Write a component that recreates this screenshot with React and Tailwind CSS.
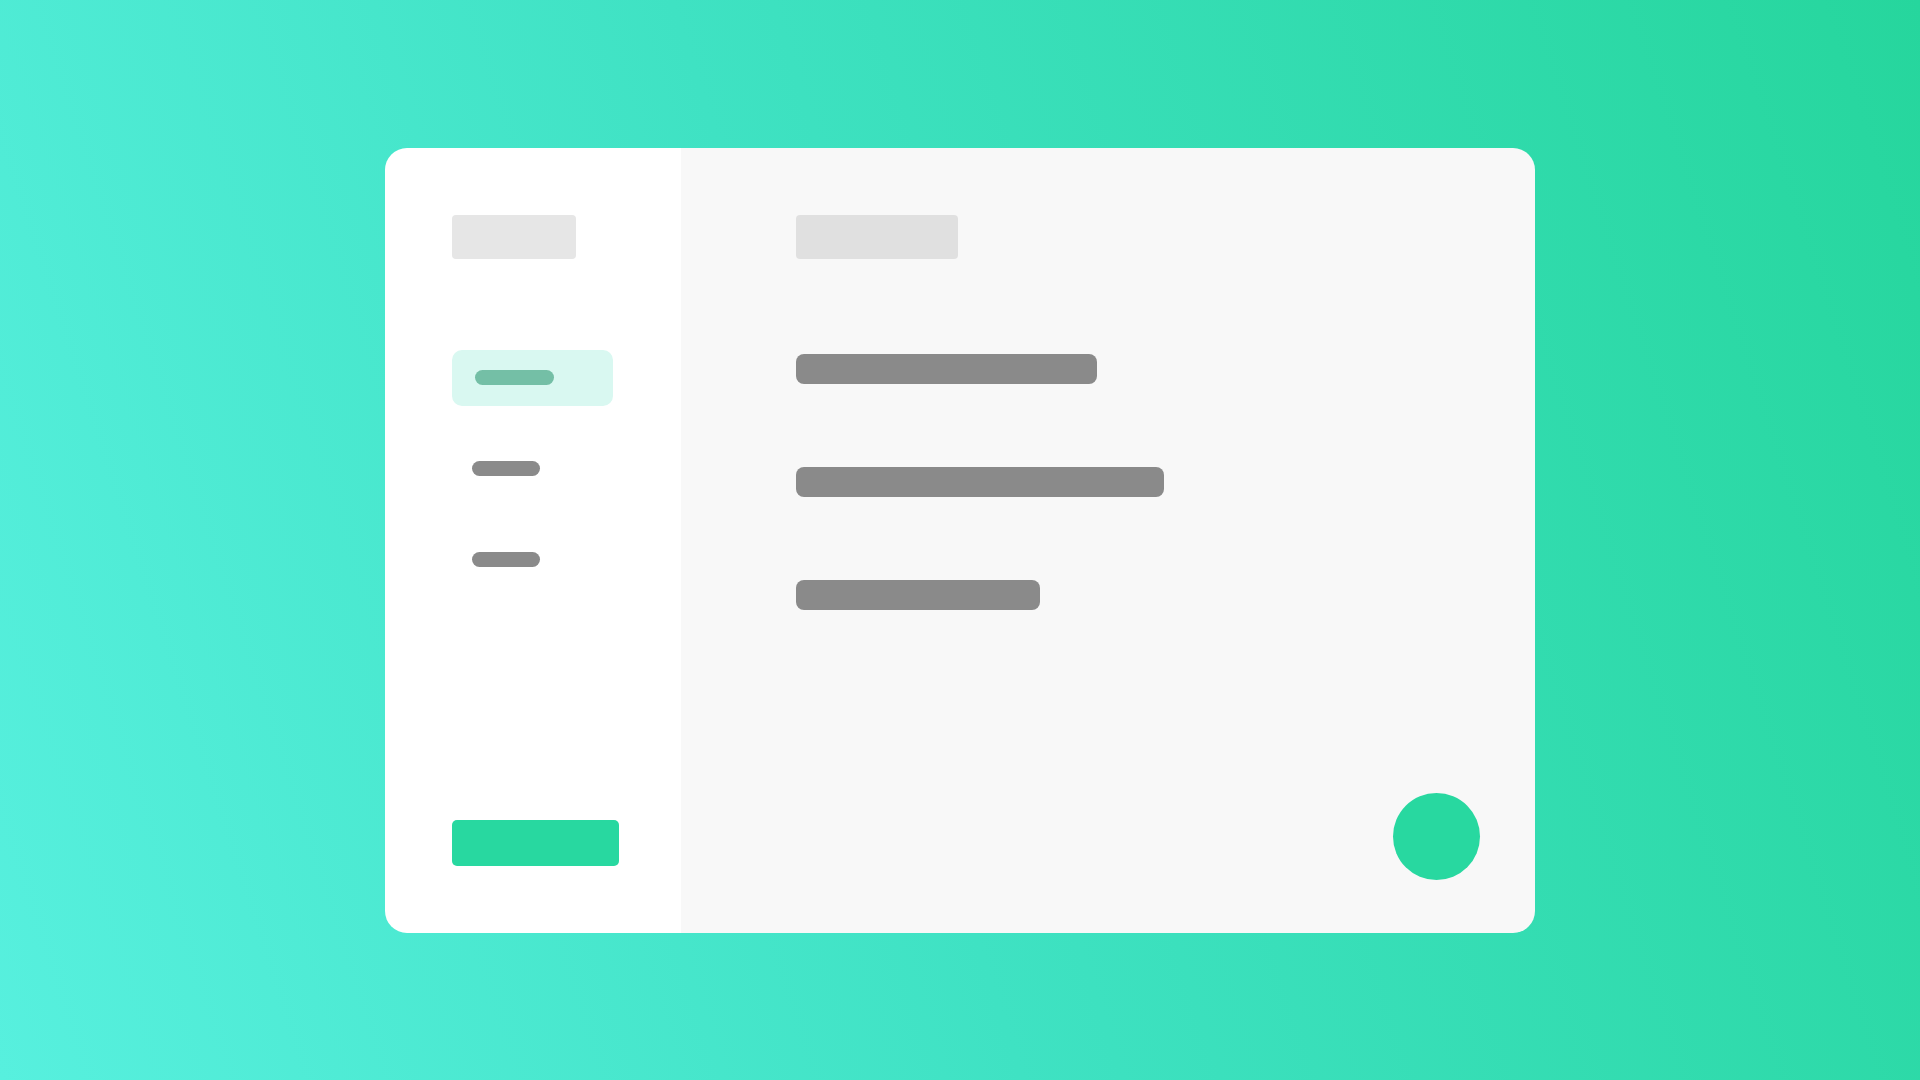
import React from 'react';

function NavItem({ active, width }) {
  return (
    <div
      className={`h-[56px] w-[161px] flex items-center rounded-[10px] ${
        active ? 'bg-[#d9f8f1] pl-[23px]' : 'pl-[20px]'
      }`}
    >
      <div className={`h-[15px] rounded-full ${active ? 'bg-[#74bfa6]' : 'bg-[#8a8a8a]'} ${width}`}></div>
    </div>
  );
}

export default function App() {
  return (
    <div className="w-full h-screen flex items-center justify-center bg-[linear-gradient(72deg,#57f0de_0%,#3fe2c3_45%,#26d69d_100%)]">
      {/* Window */}
      <div className="w-[1150px] h-[785px] flex rounded-[22px] overflow-hidden">
        {/* Sidebar */}
        <div className="w-[296px] bg-white flex flex-col p-[67px]">
          <div className="w-[124px] h-[44px] rounded-[4px] bg-[#e6e6e6]"></div>
          <div className="mt-[91px] flex flex-col gap-[35px]">
            <NavItem active width="w-[79px]" />
            <NavItem width="w-[68px]" />
            <NavItem width="w-[68px]" />
          </div>
          <div className="mt-auto w-[167px] h-[46px] rounded-[5px] bg-[#28d8a0]"></div>
        </div>

        {/* Main */}
        <div className="flex-1 bg-[#f8f8f8] flex flex-col pl-[115px] pt-[67px] pr-[55px] pb-[53px]">
          <div className="w-[162px] h-[44px] rounded-[4px] bg-[#e0e0e0]"></div>
          <div className="mt-[95px] flex flex-col gap-[83px]">
            <div className="w-[301px] h-[30px] rounded-[8px] bg-[#8a8a8a]"></div>
            <div className="w-[368px] h-[30px] rounded-[8px] bg-[#8a8a8a]"></div>
            <div className="w-[244px] h-[30px] rounded-[8px] bg-[#8a8a8a]"></div>
          </div>
          <div className="mt-auto self-end w-[87px] h-[87px] rounded-full bg-[#28d8a0]"></div>
        </div>
      </div>
    </div>
  );
}
